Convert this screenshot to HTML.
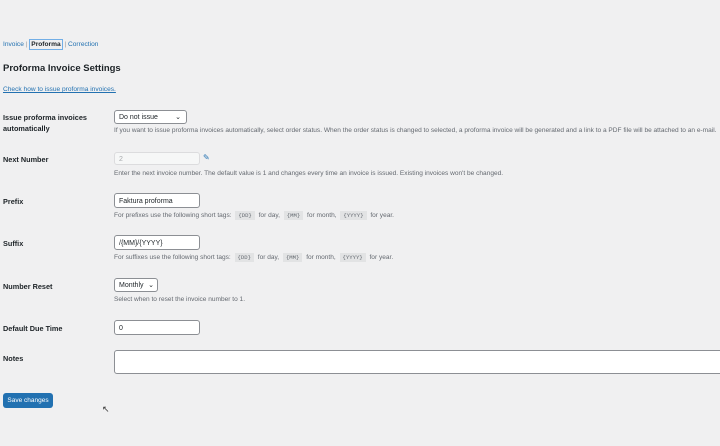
<!DOCTYPE html><html><head><style>
body{margin:0;width:720px;height:446px;background:#f0f0f1;font-family:"Liberation Sans",sans-serif;color:#1d2327;position:relative;overflow:hidden}
div,span,a{position:absolute;white-space:nowrap}
.l{left:3px;font-size:7.3px;font-weight:bold}
.d{left:114px;font-size:6.55px;color:#646970}
.in{left:114px;background:#fff;border:1px solid #8c8f94;border-radius:3px;height:13px;font-size:7px;line-height:13px;padding-left:4px;box-sizing:border-box}
code{background:#e2e3e4;font-family:"Liberation Mono",monospace;font-size:5.6px;padding:1px 3px;margin:0 2px}
.ch{position:absolute;right:5px;top:0;font-size:7px}
</style></head><body>
<div style="left:3px;top:41px;font-size:6.6px;color:#2271b1">Invoice <span style="position:static;color:#999">|</span> <span style="position:static;color:#1d2327;font-weight:bold;border:1px solid #72aee6;padding:1px 1px">Proforma</span> <span style="position:static;color:#999">|</span> Correction</div>
<div style="left:3px;top:63px;font-size:9.5px;font-weight:bold">Proforma Invoice Settings</div>
<div style="left:3px;top:86px;font-size:6.6px;color:#2271b1;text-decoration:underline">Check how to issue proforma invoices.</div>
<div class="l" style="top:112px;line-height:11px">Issue proforma invoices<br>automatically</div>
<div class="in" style="top:110px;width:73px;height:14px;line-height:14px">Do not issue<span class="ch">⌄</span></div>
<div class="d" style="top:127px">If you want to issue proforma invoices automatically, select order status. When the order status is changed to selected, a proforma invoice will be generated and a link to a PDF file will be attached to an e-mail.</div>
<div class="l" style="top:155px">Next Number</div>
<div class="in" style="top:152px;width:86px;background:#f6f7f7;border-color:#dcdcde;color:#a7aaad">2</div>
<div style="left:203px;top:153px;font-size:8px;color:#2271b1">✎</div>
<div class="d" style="top:170px">Enter the next invoice number. The default value is 1 and changes every time an invoice is issued. Existing invoices won't be changed.</div>
<div class="l" style="top:197px">Prefix</div>
<div class="in" style="top:193px;width:86px;height:15px;line-height:15px">Faktura proforma</div>
<div class="d" style="top:212px">For prefixes use the following short tags: <code>{DD}</code> for day, <code>{MM}</code> for month, <code>{YYYY}</code> for year.</div>
<div class="l" style="top:239px">Suffix</div>
<div class="in" style="top:235px;width:86px;height:15px;line-height:15px">/{MM}/{YYYY}</div>
<div class="d" style="top:254px">For suffixes use the following short tags: <code>{DD}</code> for day, <code>{MM}</code> for month, <code>{YYYY}</code> for year.</div>
<div class="l" style="top:282px">Number Reset</div>
<div class="in" style="top:278px;width:44px;height:14px;line-height:14px">Monthly<span class="ch" style="right:3px">⌄</span></div>
<div class="d" style="top:296px">Select when to reset the invoice number to 1.</div>
<div class="l" style="top:324px">Default Due Time</div>
<div class="in" style="top:320px;width:86px;height:15px;line-height:15px">0</div>
<div class="l" style="top:354px">Notes</div>
<div class="in" style="top:350px;width:620px;height:24px"></div>
<div style="left:3px;top:393px;width:50px;height:15px;background:#2271b1;border-radius:3px;color:#fff;font-size:6.5px;line-height:15px;text-align:center">Save changes</div>
<div style="left:102px;top:404px;font-size:9px;color:#333">↖</div>
</body></html>
